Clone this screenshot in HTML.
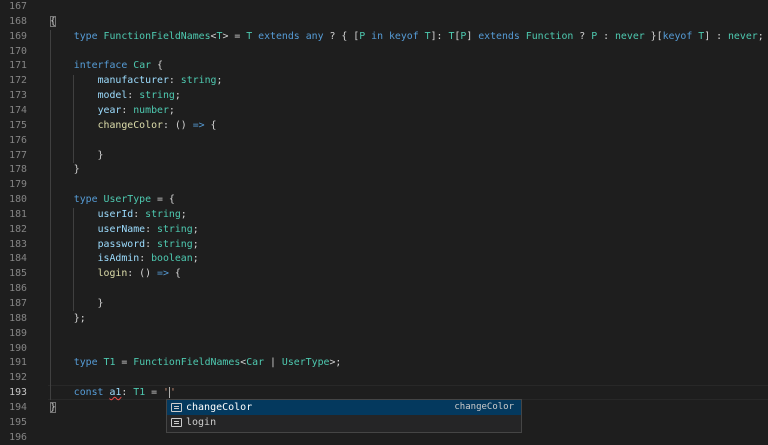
<!DOCTYPE html><html><head><style>
body{margin:0;width:768px;height:445px;background:#1e1e1e;overflow:hidden;position:relative;font-family:"DejaVu Sans Mono","Liberation Mono",monospace;font-size:9.9px;}
.l{position:absolute;left:0;height:14.85px;line-height:14.85px;white-space:pre;color:#d4d4d4;width:768px;margin-top:1px}
.n{position:absolute;left:0;width:27px;text-align:right;color:#858585}
.c{position:absolute;left:50px;letter-spacing:0px}
.k{color:#569cd6}.t{color:#4ec9b0}.p{color:#9cdcfe}.f{color:#dcdcaa}.s{color:#ce9178}
.g{position:absolute;width:1px;background:#404040}
.b{outline:1px solid #777;outline-offset:-1px}
.ic{position:absolute;left:4px;width:11px;height:9px;border:1px solid #ccc;border-radius:1px;box-sizing:border-box;background:linear-gradient(#ccc,#ccc) 2px 2px/5px 1px no-repeat,linear-gradient(#ccc,#ccc) 2px 4px/5px 1px no-repeat}
</style></head><body>
<div style="position:absolute;left:48px;top:385px;width:720px;height:15px;border-top:1px solid #282828;border-bottom:1px solid #282828;box-sizing:border-box"></div>
<div class="g" style="left:50px;top:30px;height:370px"></div>
<div class="g" style="left:73px;top:75px;height:88px"></div>
<div class="g" style="left:73px;top:208px;height:103px"></div>
<div class="l" style="top:-1px"><span class="n">167</span></div>
<div class="l" style="top:13.85px"><span class="n">168</span><span class="c"><span class="b">{</span></span></div>
<div class="l" style="top:28.7px"><span class="n">169</span><span class="c">    <span class="k">type</span> <span class="t">FunctionFieldNames</span>&lt;<span class="t">T</span>&gt; = <span class="t">T</span> <span class="k">extends</span> <span class="k">any</span> ? { [<span class="t">P</span> <span class="k">in</span> <span class="k">keyof</span> <span class="t">T</span>]: <span class="t">T</span>[<span class="t">P</span>] <span class="k">extends</span> <span class="t">Function</span> ? <span class="t">P</span> : <span class="t">never</span> }[<span class="k">keyof</span> <span class="t">T</span>] : <span class="t">never</span>;</span></div>
<div class="l" style="top:43.55px"><span class="n">170</span></div>
<div class="l" style="top:58.4px"><span class="n">171</span><span class="c">    <span class="k">interface</span> <span class="t">Car</span> {</span></div>
<div class="l" style="top:73.25px"><span class="n">172</span><span class="c">        <span class="p">manufacturer</span>: <span class="t">string</span>;</span></div>
<div class="l" style="top:88.1px"><span class="n">173</span><span class="c">        <span class="p">model</span>: <span class="t">string</span>;</span></div>
<div class="l" style="top:102.95px"><span class="n">174</span><span class="c">        <span class="p">year</span>: <span class="t">number</span>;</span></div>
<div class="l" style="top:117.8px"><span class="n">175</span><span class="c">        <span class="f">changeColor</span>: () <span class="k">=&gt;</span> {</span></div>
<div class="l" style="top:132.65px"><span class="n">176</span></div>
<div class="l" style="top:147.5px"><span class="n">177</span><span class="c">        }</span></div>
<div class="l" style="top:162.35px"><span class="n">178</span><span class="c">    }</span></div>
<div class="l" style="top:177.2px"><span class="n">179</span></div>
<div class="l" style="top:192.05px"><span class="n">180</span><span class="c">    <span class="k">type</span> <span class="t">UserType</span> = {</span></div>
<div class="l" style="top:206.9px"><span class="n">181</span><span class="c">        <span class="p">userId</span>: <span class="t">string</span>;</span></div>
<div class="l" style="top:221.75px"><span class="n">182</span><span class="c">        <span class="p">userName</span>: <span class="t">string</span>;</span></div>
<div class="l" style="top:236.6px"><span class="n">183</span><span class="c">        <span class="p">password</span>: <span class="t">string</span>;</span></div>
<div class="l" style="top:251.45px"><span class="n">184</span><span class="c">        <span class="p">isAdmin</span>: <span class="t">boolean</span>;</span></div>
<div class="l" style="top:266.3px"><span class="n">185</span><span class="c">        <span class="f">login</span>: () <span class="k">=&gt;</span> {</span></div>
<div class="l" style="top:281.15px"><span class="n">186</span></div>
<div class="l" style="top:296px"><span class="n">187</span><span class="c">        }</span></div>
<div class="l" style="top:310.85px"><span class="n">188</span><span class="c">    };</span></div>
<div class="l" style="top:325.7px"><span class="n">189</span></div>
<div class="l" style="top:340.55px"><span class="n">190</span></div>
<div class="l" style="top:355.4px"><span class="n">191</span><span class="c">    <span class="k">type</span> <span class="t">T1</span> = <span class="t">FunctionFieldNames</span>&lt;<span class="t">Car</span> | <span class="t">UserType</span>&gt;;</span></div>
<div class="l" style="top:370.25px"><span class="n">192</span></div>
<div class="l" style="top:385.1px"><span class="n" style="color:#c6c6c6">193</span><span class="c">    <span class="k">const</span> <span class="p" style="text-decoration:underline wavy #f14c4c">a1</span>: <span class="t">T1</span> = <span class="s">'</span><span style="border-left:1px solid #aeafad"></span><span class="s">'</span></span></div>
<div class="l" style="top:399.95px"><span class="n">194</span><span class="c"><span class="b">}</span></span></div>
<div class="l" style="top:414.8px"><span class="n">195</span></div>
<div class="l" style="top:429.65px"><span class="n">196</span></div>
<div style="position:absolute;left:166px;top:399px;width:356px;height:34px;background:#252526;border:1px solid #454545;box-sizing:border-box;color:#cccccc;font-size:10px">
<div style="position:absolute;left:0;top:0;right:0;height:15px;background:#04395e"></div>
<div class="ic" style="top:3px"></div>
<div class="ic" style="top:18px"></div>
<div style="position:absolute;left:19px;top:0;line-height:15px;color:#fff">changeColor</div>
<div style="position:absolute;right:7px;top:0;line-height:15px;font-size:9px;color:#ccc">changeColor</div>
<div style="position:absolute;left:19px;top:15px;line-height:15px">login</div>
</div>
</body></html>
